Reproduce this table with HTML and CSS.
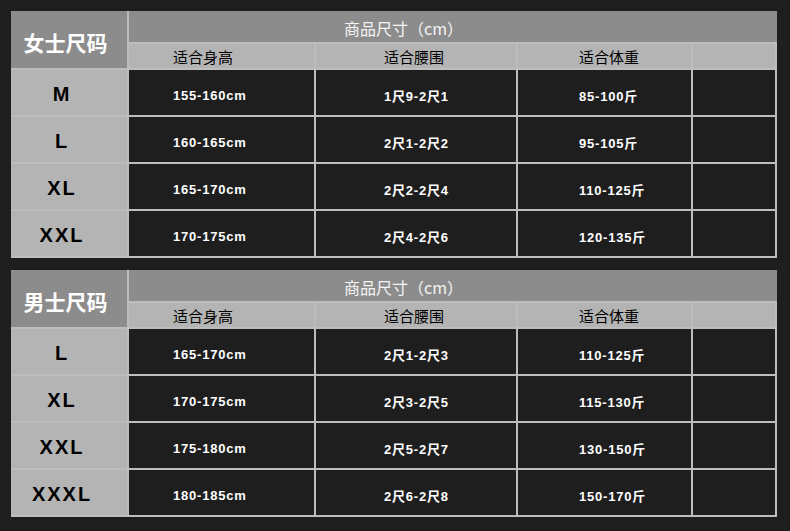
FILE: index.html
```html
<!DOCTYPE html>
<html lang="zh-CN">
<head>
<meta charset="utf-8">
<link rel="stylesheet" href="styles.css">
</head>
<body>
<div class="page">
  <div class="size-table">
    <div class="label">女士尺码</div>
    <div class="title">商品尺寸（cm）</div>
    <div class="colhead c1">适合身高</div>
    <div class="colhead c2">适合腰围</div>
    <div class="colhead c3">适合体重</div>
    <div class="colhead c4"></div>

    <div class="size">M</div>
    <div class="data c1">155-160cm</div>
    <div class="data c2">1尺9-2尺1</div>
    <div class="data c3">85-100斤</div>
    <div class="data c4"></div>

    <div class="size">L</div>
    <div class="data c1">160-165cm</div>
    <div class="data c2">2尺1-2尺2</div>
    <div class="data c3">95-105斤</div>
    <div class="data c4"></div>

    <div class="size">XL</div>
    <div class="data c1">165-170cm</div>
    <div class="data c2">2尺2-2尺4</div>
    <div class="data c3">110-125斤</div>
    <div class="data c4"></div>

    <div class="size">XXL</div>
    <div class="data c1">170-175cm</div>
    <div class="data c2">2尺4-2尺6</div>
    <div class="data c3">120-135斤</div>
    <div class="data c4"></div>
  </div>

  <div class="size-table">
    <div class="label">男士尺码</div>
    <div class="title">商品尺寸（cm）</div>
    <div class="colhead c1">适合身高</div>
    <div class="colhead c2">适合腰围</div>
    <div class="colhead c3">适合体重</div>
    <div class="colhead c4"></div>

    <div class="size">L</div>
    <div class="data c1">165-170cm</div>
    <div class="data c2">2尺1-2尺3</div>
    <div class="data c3">110-125斤</div>
    <div class="data c4"></div>

    <div class="size">XL</div>
    <div class="data c1">170-175cm</div>
    <div class="data c2">2尺3-2尺5</div>
    <div class="data c3">115-130斤</div>
    <div class="data c4"></div>

    <div class="size">XXL</div>
    <div class="data c1">175-180cm</div>
    <div class="data c2">2尺5-2尺7</div>
    <div class="data c3">130-150斤</div>
    <div class="data c4"></div>

    <div class="size">XXXL</div>
    <div class="data c1">180-185cm</div>
    <div class="data c2">2尺6-2尺8</div>
    <div class="data c3">150-170斤</div>
    <div class="data c4"></div>
  </div>
</div>
</body>
</html>
```
FILE: styles.css
```css
html, body {
  margin: 0;
  padding: 0;
  background: #1e1e1e;
}

body {
  width: 790px;
  height: 531px;
  overflow: hidden;
  font-family: "Liberation Sans", "Noto Sans CJK SC", sans-serif;
}

.page {
  padding: 11px 0 0 11px;
  display: flex;
  flex-direction: column;
  gap: 12px;
}

.size-table {
  width: 766px;
  box-sizing: border-box;
  display: grid;
  grid-template-columns: 116px 185px 200px 173px 82px;
  grid-template-rows: 31px 24px 45px 45px 45px 45px;
  gap: 2px;
  padding: 0 2px 2px 0;
  background: #bdbdbd;
}

.label {
  grid-row: 1 / 3;
  grid-column: 1;
  background: #8c8c8c;
  color: #fff;
  font-family: "Noto Sans CJK SC", sans-serif;
  font-weight: 700;
  font-size: 21px;
  display: flex;
  align-items: center;
  justify-content: center;
  padding: 5px 7px 0 0;
}

.title {
  grid-row: 1;
  grid-column: 2 / 6;
  margin-right: -2px;
  background: #8c8c8c;
  color: #f4f4f4;
  font-family: "Noto Sans CJK SC", sans-serif;
  font-size: 16px;
  display: flex;
  align-items: center;
  padding: 3px 0 0 215px;
}

.colhead {
  background: #b4b4b4;
  color: #000;
  font-family: "Noto Sans CJK SC", sans-serif;
  font-size: 15px;
  display: flex;
  align-items: center;
  padding-top: 1px;
}

.size {
  grid-column: 1;
  background: #b4b4b4;
  color: #000;
  font-weight: 700;
  font-size: 20px;
  letter-spacing: 2px;
  display: flex;
  align-items: center;
  justify-content: center;
  padding: 3px 14px 0 0;
}

.data {
  background: #1e1e1e;
  color: #fff;
  font-weight: 700;
  font-size: 13px;
  letter-spacing: 0.8px;
  display: flex;
  align-items: center;
  padding-top: 5px;
}

.c1 { padding-left: 44px; }
.c2 { padding-left: 68px; }
.c3 { padding-left: 61px; }
```
